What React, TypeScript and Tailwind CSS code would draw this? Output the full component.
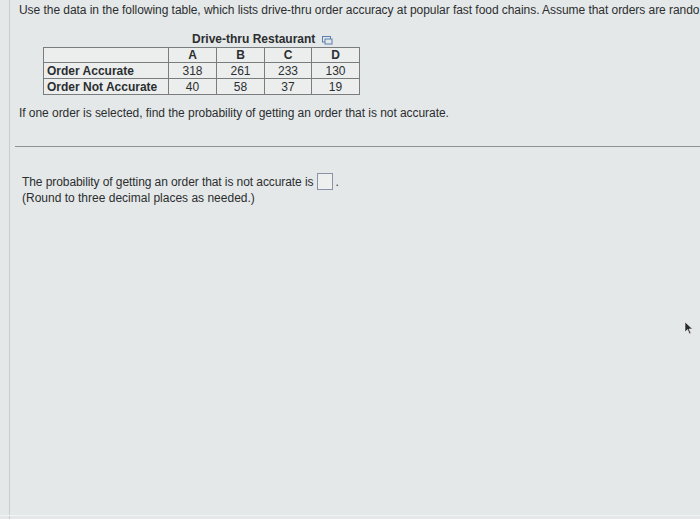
import React from "react";

export default function App() {
  const cell = "border border-[#7a7d7e] px-1 text-center leading-[14px]";
  return (
    <div className="w-[700px] h-[519px] bg-[#e5e8e8] overflow-hidden relative font-['Liberation_Sans',Arial,sans-serif] text-[#2b2e30]">
      <div className="absolute left-[9px] top-0 bottom-0 w-px bg-[#c9cccc]" />
      <div className="pl-[19px] pt-[3px]">
        <p className="whitespace-nowrap text-[12px] leading-[15px] tracking-[-0.05px]">
          Use the data in the following table, which lists drive-thru order accuracy at popular fast food chains. Assume that orders are rando
        </p>
        <div className="mt-[14px] ml-[24px] w-[316px]">
          <div className="flex items-center gap-[7px] pl-[149px] font-bold text-[12px] leading-[15px]">
            <span className="whitespace-nowrap">Drive-thru Restaurant</span>
            <svg width="11" height="9" viewBox="0 0 11 9" className="mt-[2px]">
              <rect x="0.5" y="0.5" width="8" height="5.5" fill="none" stroke="#5a7fb0" strokeWidth="1" />
              <rect x="3" y="3" width="7" height="5" fill="#e5e8e8" stroke="#5a7fb0" strokeWidth="1" />
            </svg>
          </div>
          <table className="table-fixed w-[316px] border-collapse text-[12px] bg-[#eceeee]">
            <colgroup>
              <col className="w-[125px]" />
              <col className="w-[48px]" />
              <col className="w-[48px]" />
              <col className="w-[47px]" />
              <col className="w-[48px]" />
            </colgroup>
            <tbody>
              <tr>
                <td className={cell + " h-[15px]"}></td>
                <td className={cell + " font-bold"}>A</td>
                <td className={cell + " font-bold"}>B</td>
                <td className={cell + " font-bold"}>C</td>
                <td className={cell + " font-bold"}>D</td>
              </tr>
              <tr>
                <td className="border border-[#7a7d7e] px-[3px] text-left font-bold leading-[14px] h-[16px] whitespace-nowrap">Order Accurate</td>
                <td className={cell}>318</td>
                <td className={cell}>261</td>
                <td className={cell}>233</td>
                <td className={cell}>130</td>
              </tr>
              <tr>
                <td className="border border-[#7a7d7e] px-[3px] text-left font-bold leading-[14px] h-[16px] whitespace-nowrap">Order Not Accurate</td>
                <td className={cell}>40</td>
                <td className={cell}>58</td>
                <td className={cell}>37</td>
                <td className={cell}>19</td>
              </tr>
            </tbody>
          </table>
        </div>
        <p className="mt-[11px] text-[12px] leading-[14px] whitespace-nowrap tracking-[-0.05px]">
          If one order is selected, find the probability of getting an order that is not accurate.
        </p>
      </div>
      <div className="ml-[15px] mt-[26px] h-px bg-[#8e9292]" />
      <div className="pl-[22px] pt-[26px] text-[12px] leading-[16px]">
        <div className="flex items-center whitespace-nowrap">
          <span className="tracking-[-0.08px]">The probability of getting an order that is not accurate is</span>
          <span className="inline-block w-[16px] h-[17px] border border-[#8a92a8] bg-[#eef0f0] ml-[4px]" />
          <span className="ml-[2px]">.</span>
        </div>
        <div className="whitespace-nowrap">(Round to three decimal places as needed.)</div>
      </div>
      <svg className="absolute left-[684px] top-[321px]" width="10" height="14" viewBox="0 0 10 14">
        <path d="M1 1 L1 11 L3.5 8.5 L5.5 13 L7 12.3 L5 8 L8.5 8 Z" fill="#2a2a2a" stroke="#eee" strokeWidth="0.6" />
      </svg>
      <div className="absolute left-0 right-0 bottom-[3px] h-px bg-[#f2f4f4]" />
    </div>
  );
}
